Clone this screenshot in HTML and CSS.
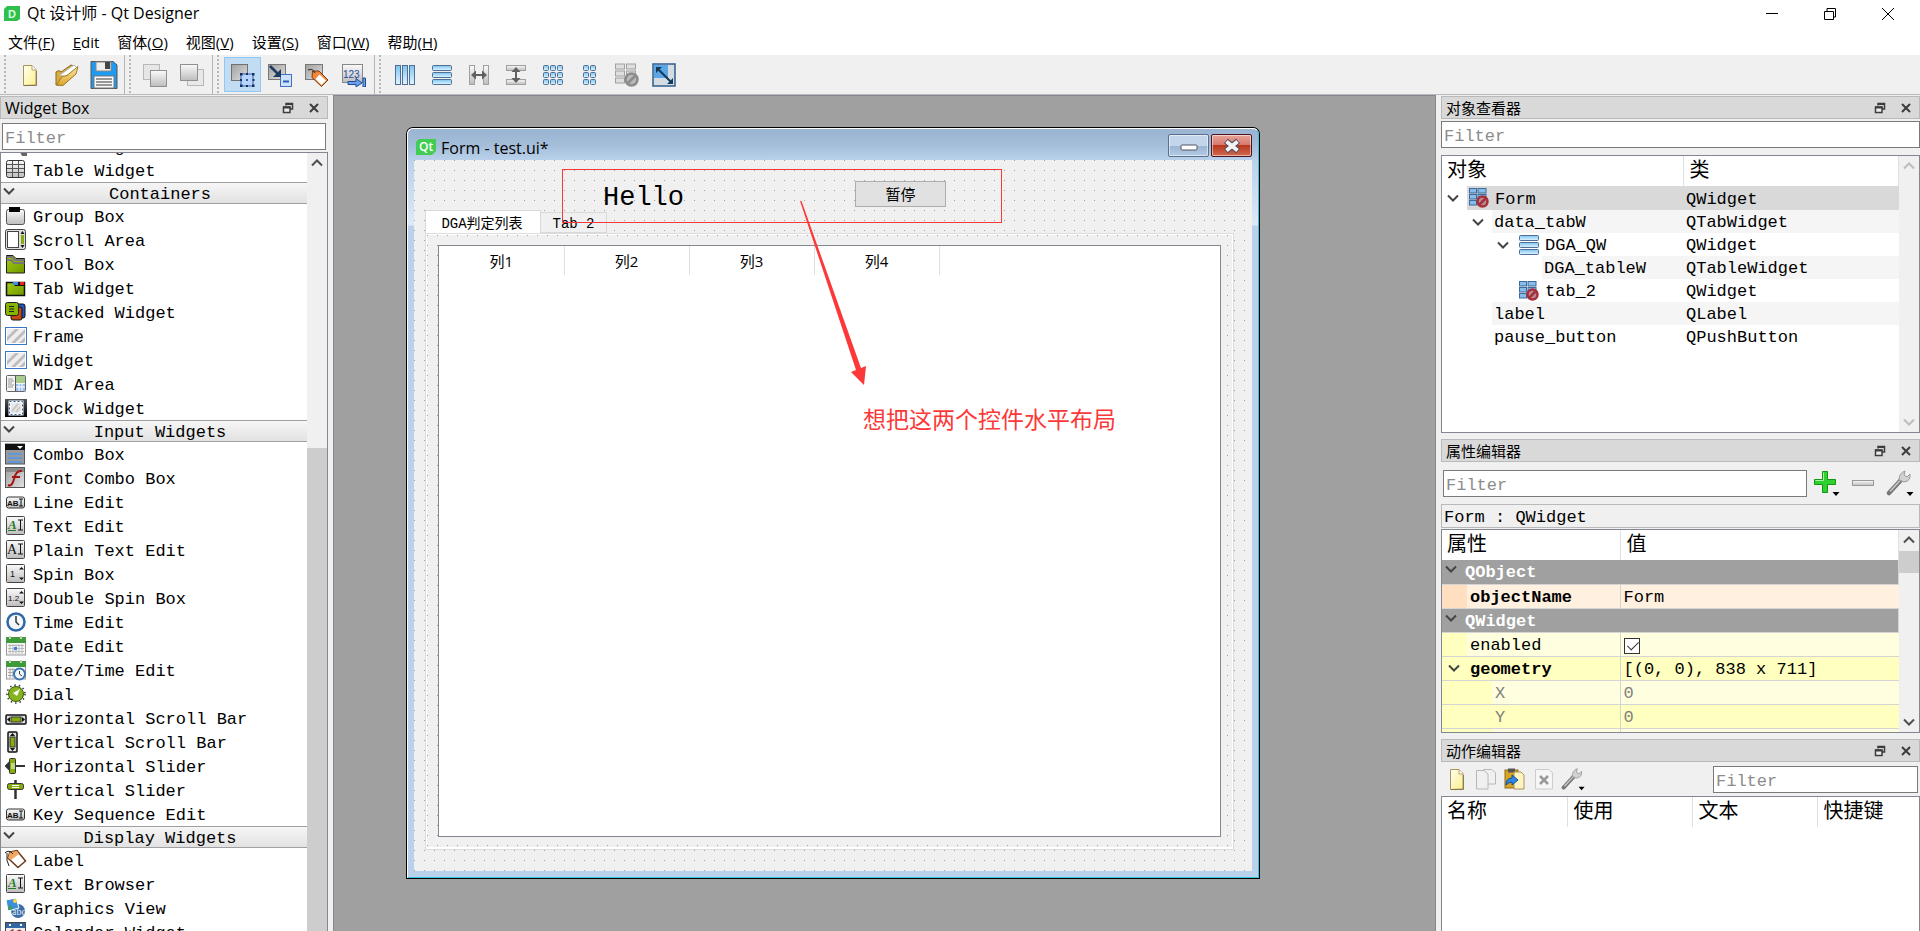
FILE: index.html
```html
<!DOCTYPE html>
<html lang="zh-CN">
<head>
  <meta charset="UTF-8" />
  <title>Qt 设计师 - Qt Designer</title>
  <link rel="stylesheet" href="styles.css">
</head>
<body>

  <!-- Gradients shared by the icons -->
  <svg class="gradients" width="0" height="0" aria-hidden="true">
    <defs>
      <linearGradient id="g-gray" x1="0" y1="0" x2="0" y2="1"><stop offset="0" stop-color="#fafafa"/><stop offset="1" stop-color="#bdbdbd"/></linearGradient>
      <linearGradient id="g-steel" x1="0" y1="0" x2="1" y2="1"><stop offset="0" stop-color="#a0a0a0"/><stop offset="1" stop-color="#e0e0e0"/></linearGradient>
      <linearGradient id="g-blue" x1="0" y1="0" x2="0" y2="1"><stop offset="0" stop-color="#7cc4f0"/><stop offset="1" stop-color="#e2f5ff"/></linearGradient>
      <linearGradient id="g-page" x1="0" y1="0" x2="1" y2="1"><stop offset="0" stop-color="#fffef0"/><stop offset="1" stop-color="#fdf08e"/></linearGradient>
      <linearGradient id="g-folder" x1="0" y1="0" x2="0" y2="1"><stop offset="0" stop-color="#ffe9a0"/><stop offset="1" stop-color="#dba52c"/></linearGradient>
      <linearGradient id="g-green" x1="0" y1="0" x2="1" y2="1"><stop offset="0" stop-color="#a5cf10"/><stop offset="1" stop-color="#6d9600"/></linearGradient>
      <linearGradient id="g-black" x1="0" y1="0" x2="0" y2="1"><stop offset="0" stop-color="#555"/><stop offset="1" stop-color="#000"/></linearGradient>
    </defs>
  </svg>

  <!-- Icon sprite -->
  <svg class="sprite" aria-hidden="true">
    <symbol id="i-restore" viewBox="0 0 12 12"><path d="M4 3.500V1.500H10.500V7H8" fill="none" stroke="#3c3c3c" stroke-width="1.500"/><path d="M4 2H11" stroke="#3c3c3c" stroke-width="2"/><rect x="1.500" y="5" width="6.500" height="5.500" fill="#eee" stroke="#3c3c3c" stroke-width="1.500"/><path d="M1 5.500H8.500" stroke="#3c3c3c" stroke-width="2"/></symbol>
    <symbol id="i-close" viewBox="0 0 12 12"><path d="M2 2L10 10M10 2L2 10" stroke="#3c3c3c" stroke-width="2" fill="none"/></symbol>
    <symbol id="i-down" viewBox="0 0 12 12"><path d="M1 3.500L6 8.500L11 3.500" stroke="#444" stroke-width="2" fill="none"/></symbol>
    <symbol id="i-up" viewBox="0 0 12 12"><path d="M1 8.500L6 3.500L11 8.500" stroke="currentColor" stroke-width="2" fill="none"/></symbol>

    <symbol id="i-new" viewBox="0 0 24 24"><path d="M5.500 2.500H14L18 6.500V22L5.500 22.500Z" fill="url(#g-page)" stroke="#a8935a"/><path d="M14 2.500V7H18" fill="#fff" stroke="#b5a36e"/><path d="M18.500 8V22.500H6" fill="none" stroke="#6f5d2e" stroke-width=".7"/></symbol>
    <symbol id="i-open" viewBox="0 0 24 24"><path d="M1 22V9L4 7.500L6 9L16 2L19 3V12L6 22Z" fill="#d8ac42" stroke="#8a6a1c"/><path d="M5 12L19 2L22 5L10 14Z" fill="#fff" stroke="#bbb"/><path d="M1.500 22L7 13.500L12 12.500L23 3.500L21 11L8 22.500Z" fill="url(#g-folder)" stroke="#9d7a26"/></symbol>
    <symbol id="i-save" viewBox="0 0 28 28"><path d="M1 .500H23L27 4V27.500H1Z" fill="#1d9af2" stroke="#555"/><rect x="6" y="1" width="15" height="9" fill="#eee" stroke="#888"/><rect x="15" y="1" width="5" height="7" fill="#444"/><rect x="4" y="15" width="20" height="12" fill="#fafafa" stroke="#777"/><path d="M6 18H22M6 21H22M6 24H22" stroke="#777" stroke-width="1.500"/></symbol>
    <symbol id="i-back" viewBox="0 0 24 24"><rect x=".500" y="1.500" width="16" height="15" fill="#e6e6e6" stroke="#b8b8b8"/><rect x="7.500" y="7.500" width="16" height="16" fill="url(#g-gray)" stroke="#909090"/></symbol>
    <symbol id="i-front" viewBox="0 0 24 24"><rect x="7.500" y="6.500" width="16" height="16" fill="#e8e8e8" stroke="#b8b8b8"/><rect x=".500" y="1.500" width="17" height="16" fill="url(#g-gray)" stroke="#909090"/></symbol>
    <symbol id="i-edit" viewBox="0 0 24 24"><rect x=".500" y="1.500" width="16" height="16" fill="url(#g-steel)" stroke="#707070"/><rect x="10" y="11" width="12" height="12" fill="#b9d4fa" stroke="#2d5fb5"/><path d="M9 10h2.500v2.500h-2.500zM15 10h2v2h-2zM21 10h2.500v2.500h-2.500zM9 16h2v2h-2zM21.500 16h2v2h-2zM9 21.500h2.500v2.500h-2.500zM15 22h2v2h-2zM21 21.500h2.500v2.500h-2.500z" fill="#132f5e"/><rect x="15" y="16" width="2" height="2" fill="#2d5fb5"/></symbol>
    <symbol id="i-signal" viewBox="0 0 24 24"><rect x=".500" y="1.500" width="17" height="15" fill="url(#g-steel)" stroke="#777"/><rect x="12.500" y="11.500" width="11" height="12" fill="#cfe2fb" stroke="#3f72c4"/><path d="M15 18.500H21" stroke="#2d5fb5" stroke-width="2"/><path d="M2 3L10 11" stroke="#1d3b5f" stroke-width="2.500"/><path d="M13 6V14H5Z" fill="#1d3b5f"/></symbol>
    <symbol id="i-buddy" viewBox="0 0 24 24"><rect x=".500" y="1.500" width="17" height="15" fill="url(#g-steel)" stroke="#777"/><path d="M7.500 8H14L23 17L16.500 23.500L7 14.500Z" fill="#f08838" stroke="#7a3a12"/><path d="M14.500 11.500L21 17.500L16.500 22L10.500 16Z" fill="#fff"/><path d="M3 7Q8 5 10 10" fill="none" stroke="#222"/></symbol>
    <symbol id="i-order" viewBox="0 0 24 24"><rect x=".500" y="1.500" width="20" height="18" fill="url(#g-gray)" stroke="#888"/><text x="1" y="15" font-family="Liberation Sans" font-size="10" fill="#1f4d9c">123</text><path d="M6 18.500H14V15.500L20 20L14 24V21.500H6ZM21 15H23.500V24H21Z" fill="#6f9fe8" stroke="#1f4d9c"/></symbol>
    <symbol id="i-cols" viewBox="0 0 24 24"><g fill="url(#g-blue)" stroke="#4f6f95"><rect x="2.500" y="2.500" width="5" height="19"/><rect x="9.500" y="2.500" width="5" height="19"/><rect x="16.500" y="2.500" width="5" height="19"/></g></symbol>
    <symbol id="i-rows" viewBox="0 0 24 24"><g fill="url(#g-blue)" stroke="#4f6f95"><rect x="2.500" y="2.500" width="19" height="5" rx="1"/><rect x="2.500" y="9.500" width="19" height="5" rx="1"/><rect x="2.500" y="16.500" width="19" height="5" rx="1"/></g></symbol>
    <symbol id="i-hsplit" viewBox="0 0 24 24"><g fill="url(#g-gray)" stroke="#a0a0a0"><rect x="2.500" y="2.500" width="5" height="19"/><rect x="16.500" y="2.500" width="5" height="19"/></g><path d="M4 12L9 7.500V11H15V7.500L20 12L15 16.500V13H9V16.500Z" fill="#606060"/></symbol>
    <symbol id="i-vsplit" viewBox="0 0 24 24"><g fill="url(#g-gray)" stroke="#a0a0a0"><rect x="2.500" y="2.500" width="19" height="5"/><rect x="2.500" y="16.500" width="19" height="5"/></g><path d="M12 4L16.500 9H13V15H16.500L12 20L7.500 15H11V9H7.500Z" fill="#606060"/></symbol>
    <symbol id="i-grid" viewBox="0 0 24 24"><g fill="url(#g-blue)" stroke="#4f6f95"><rect x="2.500" y="2.500" width="5" height="5" rx="1"/><rect x="9.500" y="2.500" width="5" height="5" rx="1"/><rect x="16.500" y="2.500" width="5" height="5" rx="1"/><rect x="2.500" y="9.500" width="5" height="5" rx="1"/><rect x="9.500" y="9.500" width="5" height="5" rx="1"/><rect x="16.500" y="9.500" width="5" height="5" rx="1"/><rect x="2.500" y="16.500" width="5" height="5" rx="1"/><rect x="9.500" y="16.500" width="5" height="5" rx="1"/><rect x="16.500" y="16.500" width="5" height="5" rx="1"/></g></symbol>
    <symbol id="i-form" viewBox="0 0 24 24"><g fill="url(#g-blue)" stroke="#4f6f95"><rect x="5.500" y="2.500" width="5" height="5" rx="1"/><rect x="12.500" y="2.500" width="5" height="5" rx="1"/><rect x="5.500" y="9.500" width="5" height="5" rx="1"/><rect x="12.500" y="9.500" width="5" height="5" rx="1"/><rect x="5.500" y="16.500" width="5" height="5" rx="1"/><rect x="12.500" y="16.500" width="5" height="5" rx="1"/></g></symbol>
    <symbol id="i-break" viewBox="0 0 24 24"><g fill="#dedede" stroke="#a0a0a0"><rect x=".500" y="1" width="9" height="5"/><rect x="11.500" y="1" width="9" height="5"/><rect x=".500" y="8" width="9" height="5"/><rect x="11.500" y="8" width="9" height="5"/><rect x=".500" y="15" width="9" height="5"/></g><circle cx="16.500" cy="16.500" r="6" fill="#b8b8b8" stroke="#8c8c8c" stroke-width="2.500"/><path d="M12.500 20.500L20.500 12.500" stroke="#8c8c8c" stroke-width="2.500"/></symbol>
    <symbol id="i-adjust" viewBox="0 0 24 24"><rect x="1" y="1" width="22" height="22" fill="#d5dce2" stroke="#2f5d8c" stroke-width="1.500"/><rect x="2" y="2" width="14" height="13" fill="#5ba6e6"/><path d="M5 5L19 19" stroke="#123a5c" stroke-width="2"/><path d="M4 4H10L4 10ZM21 21H15L21 15Z" fill="#123a5c"/></symbol>
    <symbol id="i-nolayout" viewBox="0 0 20 20"><g fill="#86bdea" stroke="#3f6a9c"><rect x=".500" y=".500" width="7" height="4.500"/><rect x="9" y=".500" width="8" height="4.500"/><rect x=".500" y="6.500" width="7" height="4.500"/><rect x="9" y="6.500" width="8" height="4.500"/><rect x=".500" y="12.500" width="7" height="4.500"/></g><circle cx="13.500" cy="13.500" r="5" fill="#b98a94" stroke="#a6303a" stroke-width="2.500"/><path d="M10 17L17 10" stroke="#a6303a" stroke-width="2.500"/></symbol>

    <symbol id="w-table" viewBox="0 0 22 22"><rect x="1.500" y="1.500" width="18" height="17" rx="2" fill="url(#g-gray)" stroke="#333"/><path d="M2 5.500H19M2 9.500H19M2 13.500H19M7.500 2V18M13.500 2V18" stroke="#555"/></symbol>
    <symbol id="w-tree" viewBox="0 0 22 22"><path d="M15 17H22V21H17Z" fill="#666"/></symbol>
    <symbol id="w-group" viewBox="0 0 22 22"><rect x="1.500" y="4.500" width="18" height="15" rx="2" fill="url(#g-gray)" stroke="#555"/><rect x="4" y="2" width="11" height="5" fill="#000"/></symbol>
    <symbol id="w-scroll" viewBox="0 0 22 22"><rect x=".500" y=".500" width="20" height="20" rx="2" fill="#ddd" stroke="#444"/><rect x="2.500" y="2.500" width="11" height="16" fill="#fff" stroke="#444"/><rect x="16" y="6" width="3" height="9" fill="#84ac0c"/><path d="M15.500 5L17.500 2L19.500 5ZM15.500 16L17.500 19L19.500 16Z" fill="#111"/></symbol>
    <symbol id="w-tool" viewBox="0 0 22 22"><path d="M1.500 2.500H8L11 5.500H19.500V20H1.500Z" fill="url(#g-green)" stroke="#1c1c1c"/><path d="M1.500 4H7L10 7H19.500M1.500 7H6L9 10H19.500" fill="none" stroke="#777" stroke-width="2"/></symbol>
    <symbol id="w-tab" viewBox="0 0 22 22"><rect x="1.500" y="5.500" width="18" height="13" fill="url(#g-green)" stroke="#111" stroke-width="1.500"/><path d="M7 5H20V9H10Z" fill="#111"/><rect x="8" y="5" width="5" height="3" fill="#3e8ee4"/><rect x="15" y="5" width="4" height="3" fill="#e22"/></symbol>
    <symbol id="w-stack" viewBox="0 0 22 22"><rect x="9" y="3" width="11" height="14" rx="2" fill="#1f56c0" stroke="#111"/><rect x="6" y="6" width="11" height="13" rx="2" fill="#c24a12" stroke="#111"/><rect x=".500" y="1.500" width="13" height="13" rx="2" fill="#86b400" stroke="#222"/><path d="M4 5.500H9M4 8H9M4 10.500H9" stroke="#222"/></symbol>
    <symbol id="w-frame" viewBox="0 0 22 22"><rect x=".500" y="2.500" width="21" height="17" fill="#fff" stroke="#3b78c4"/><rect x="2" y="4" width="18" height="14" fill="#eee"/><path d="M2 12L10 4H14L2 16ZM6 18L20 4V8L10 18ZM14 18L20 12V16L18 18Z" fill="#bdbdbd"/></symbol>
    <symbol id="w-mdi" viewBox="0 0 22 22"><rect x="1.500" y="2.500" width="19" height="16" rx="1" fill="#f4f4f4" stroke="#666"/><rect x="11" y="3" width="9" height="7" fill="#a8cc8c"/><rect x="11" y="11" width="9" height="7" fill="#9cc0f0"/><path d="M3 6H8M3 8H9M3 10H7M3 12H9M3 14H8" stroke="#999"/><path d="M14 11V18M17 11V18M11 14H20" stroke="#fff"/><path d="M10.500 3V18" stroke="#555"/></symbol>
    <symbol id="w-dock" viewBox="0 0 22 22"><rect y="2" width="22" height="18" fill="url(#g-black)"/><rect x="4.500" y="4.500" width="13" height="13" fill="#e8e8e8" stroke="#fff" stroke-width="2"/><rect x="4.500" y="4.500" width="13" height="13" fill="none" stroke="#2d5fb5" stroke-dasharray="2 2"/><path d="M7 14L13 7M11 15L15 10" stroke="#c8c8c8" stroke-width="2"/></symbol>
    <symbol id="w-combo" viewBox="0 0 22 22"><rect x=".500" y="1" width="19" height="20" fill="#999" stroke="#555"/><rect x="0" y="1" width="20" height="6" fill="#111"/><path d="M12 3H18L15 6Z" fill="#fff"/><path d="M3 11H17M3 15H17M3 19H17" stroke="#5f97d8" stroke-width="2"/></symbol>
    <symbol id="w-font" viewBox="0 0 22 22"><rect x=".500" y=".500" width="19" height="20" fill="url(#g-steel)" stroke="#555"/><rect x="1" y="1" width="18" height="4" fill="#888"/><path d="M3 18Q7 20 9 12Q11 3 17 4M7 10H15" fill="none" stroke="#a51414" stroke-width="2"/></symbol>
    <symbol id="w-line" viewBox="0 0 22 22"><rect x="1.500" y="6" width="18" height="11" rx="2" fill="url(#g-gray)" stroke="#333"/><text x="2" y="15" font-family="Liberation Sans" font-size="8" font-weight="bold" fill="#111">AB</text><path d="M14 8H18M16 8V15M14 15H18" stroke="#111"/></symbol>
    <symbol id="w-text" viewBox="0 0 22 22"><rect x="1.500" y="1.500" width="18" height="18" rx="1" fill="url(#g-gray)" stroke="#444"/><text x="3" y="14" font-family="Liberation Serif" font-size="13" font-style="italic" font-weight="bold" fill="#267a26">A</text><path d="M13 5H18M15.500 5V15M13 15H18" stroke="#111"/><path d="M3 15.500H11" stroke="#267a26"/></symbol>
    <symbol id="w-plain" viewBox="0 0 22 22"><rect x="1.500" y="1.500" width="18" height="18" rx="1" fill="url(#g-gray)" stroke="#444"/><text x="2" y="15" font-family="Liberation Serif" font-size="14" fill="#111">A</text><path d="M13 5H18M15.500 5V15M13 15H18" stroke="#111"/></symbol>
    <symbol id="w-spin" viewBox="0 0 22 22"><rect x="1.500" y="1.500" width="18" height="18" rx="1" fill="url(#g-gray)" stroke="#444"/><text x="5" y="14" font-family="Liberation Sans" font-size="9" fill="#111">1</text><path d="M14 6.500L16.500 4L19 6.500ZM14 14.500L16.500 17L19 14.500Z" fill="#111"/></symbol>
    <symbol id="w-dspin" viewBox="0 0 22 22"><rect x="1.500" y="1.500" width="18" height="18" rx="1" fill="url(#g-gray)" stroke="#444"/><text x="3" y="14" font-family="Liberation Sans" font-size="8" fill="#111">1.2</text><path d="M14 6.500L16.500 4L19 6.500ZM14 14.500L16.500 17L19 14.500Z" fill="#111"/></symbol>
    <symbol id="w-time" viewBox="0 0 22 22"><circle cx="11" cy="11" r="8.500" fill="#f4f8fc" stroke="#2f68a8" stroke-width="2.500"/><path d="M11 5V11L14 14" fill="none" stroke="#333" stroke-width="1.500"/></symbol>
    <symbol id="w-date" viewBox="0 0 22 22"><rect x="1.500" y="3" width="19" height="17" fill="#f6f6f6" stroke="#999"/><rect x="1" y="2" width="20" height="6" fill="#3f9a3a"/><path d="M5 4V1M16 4V1" stroke="#ccc" stroke-width="2"/><path d="M3 10.500H19M3 13.500H19M3 16.500H19M5 9V19M8 9V19M11 9V19M14 9V19M17 9V19" stroke="#bbb"/><rect x="9" y="12" width="3" height="3" fill="#3e7ee0"/></symbol>
    <symbol id="w-datetime" viewBox="0 0 22 22"><rect x="1.500" y="3" width="19" height="17" fill="#f6f6f6" stroke="#999"/><rect x="1" y="2" width="20" height="6" fill="#3f9a3a"/><path d="M5 4V1M16 4V1" stroke="#ccc" stroke-width="2"/><path d="M3 10.500H10M3 13.500H10M3 16.500H10M5 9V19M8 9V19" stroke="#aaa"/><circle cx="14.500" cy="15" r="5.500" fill="#f4f8fc" stroke="#3d74b0" stroke-width="2"/><path d="M14.500 12V15L17 17" fill="none" stroke="#333"/></symbol>
    <symbol id="w-dial" viewBox="0 0 22 22"><circle cx="11" cy="11" r="9" fill="none" stroke="#333" stroke-width="1.500" stroke-dasharray="1.500 3"/><circle cx="11" cy="11" r="7.500" fill="#86b41c" stroke="#3c5a08"/><path d="M15 6L12 13L8 10Z" fill="#fff"/></symbol>
    <symbol id="w-hscroll" viewBox="0 0 22 22"><rect x="1" y="8" width="20" height="9" rx="1" fill="#ddd" stroke="#111" stroke-width="1.500"/><rect x="6" y="10" width="10" height="5" fill="#84ac0c" stroke="#333"/><path d="M5 10V15L2 12.500ZM17 10V15L20 12.500Z" fill="#111"/></symbol>
    <symbol id="w-vscroll" viewBox="0 0 22 22"><rect x="3" y="1" width="9" height="20" rx="1" fill="#ddd" stroke="#111" stroke-width="1.500"/><rect x="5" y="6" width="5" height="10" fill="#84ac0c" stroke="#333"/><path d="M5 5H10L7.500 2ZM5 17H10L7.500 20Z" fill="#111"/></symbol>
    <symbol id="w-hslider" viewBox="0 0 22 22"><path d="M1 11L4 8V14ZM3 11H20" stroke="#333" stroke-width="2" fill="#333"/><rect x="4.500" y="3.500" width="6" height="15" rx="1" fill="#84ac0c" stroke="#333"/><path d="M7 8V14M9 8V14" stroke="#fff"/></symbol>
    <symbol id="w-vslider" viewBox="0 0 22 22"><path d="M10.500 1V20" stroke="#333" stroke-width="2.500"/><rect x="2.500" y="4.500" width="16" height="6" rx="2" fill="#84ac0c" stroke="#333"/><path d="M7 6.500H14M7 8.500H14" stroke="#fff"/></symbol>
    <symbol id="w-label" viewBox="0 0 22 22"><path d="M5 3L12 1.500L20.500 12L13 18.500L3 9Z" fill="#fff" stroke="#6b3a1a" stroke-width="1.500"/><path d="M5 3L12 2L14 5L6 11L3 9Z" fill="#f0a860"/><path d="M0 4Q4 0 8 5M2 4Q1 12 4 17" fill="none" stroke="#222"/></symbol>
    <symbol id="w-graphics" viewBox="0 0 22 22"><circle cx="13" cy="14" r="7" fill="#3b6ea8"/><path d="M1 3L11 1L14 11L3 14Z" fill="#3b8ee0" stroke="#fff"/><path d="M3 13L5 7L8 12Z" fill="#3fa050"/><circle cx="10" cy="4" r="2" fill="#f8d848"/><text x="7" y="18" font-family="Liberation Serif" font-size="10" fill="#dfe6ee">abc</text></symbol>
    <symbol id="w-calendar" viewBox="0 0 22 22"><rect x=".500" y="1.500" width="20" height="20" fill="#eee" stroke="#444"/><rect x="1" y="2" width="19" height="5" fill="#3465a4"/><path d="M4 4H6M15 4H17" stroke="#fff" stroke-width="2"/><path d="M5 11L7.500 9.500V18M12 11Q15 8 16 11Q16 13 12 17.500H17" fill="none" stroke="#a33" stroke-width="2"/></symbol>

    <symbol id="i-plus" viewBox="0 0 28 28"><path d="M10.500 2.500H15.500V10.500H23.500V15.500H15.500V23.500H10.500V15.500H2.500V10.500H10.500Z" fill="#2ed12e" stroke="#159415"/><path d="M11.500 3.500V11.500H3.500" fill="none" stroke="#a8f5a8"/><path d="M20.500 23H27.500L24 27Z" fill="#000"/></symbol>
    <symbol id="i-minus" viewBox="0 0 24 24"><rect x="1.500" y="9.500" width="21" height="5" fill="url(#g-gray)" stroke="#999"/></symbol>
    <symbol id="i-wrench" viewBox="0 0 28 28"><path d="M3 24L15 11" stroke="#777" stroke-width="4.500" stroke-linecap="round"/><path d="M4 22.500L14 11.500" stroke="#ccc" stroke-width="1.500"/><path d="M13 11Q13 4 19 2L18 6L21 8L24 5Q25 12 18 13Z" fill="#d2d2d2" stroke="#999"/><path d="M20.500 23H27.500L24 27Z" fill="#000"/></symbol>
    <symbol id="i-copy" viewBox="0 0 24 24"><g fill="#f0f0f0" stroke="#b8b8b8"><path d="M9.500 2.500H18L21.500 6V17H9.500Z"/><path d="M2.500 3.500H10L14 7V22H2.500Z"/></g></symbol>
    <symbol id="i-paste" viewBox="0 0 24 24"><rect x="2" y="3" width="13" height="18" fill="#d9a520" stroke="#8a6a1c"/><rect x="5" y="1.500" width="7" height="4" fill="#555"/><path d="M11 5H18L21 8V22H11Z" fill="#fdf3c2" stroke="#a8935a"/><path d="M3 18Q3 11 9 11V8L15 13L9 18V15Q6 15 3 18Z" fill="#2f86e8" stroke="#16508c"/></symbol>
    <symbol id="i-delete" viewBox="0 0 24 24"><path d="M3.500 2.500H17L20.500 6V22H3.500Z" fill="#f5f5f5" stroke="#ccc"/><path d="M8 9L16 17M16 9L8 17" stroke="#999" stroke-width="2.500"/></symbol>
  </svg>

  <header class="title-bar">
    <svg class="app-icon" viewBox="0 0 16 16"><path d="M3 0H16V13L13 15H0V3Z" fill="#2fbf4c"/><text x="4" y="12" font-family="Liberation Sans" font-size="11" font-weight="bold" fill="#d8ffdf">D</text></svg>
    <h1>Qt 设计师 - Qt Designer</h1>
    <div class="window-controls">
      <button aria-label="Minimize"><svg viewBox="0 0 14 14"><path d="M1 6.500H13" stroke="#000" fill="none"/></svg></button>
      <button aria-label="Restore"><svg viewBox="0 0 14 14"><path d="M1.500 4.500H10.500V12.500H1.500ZM4 4V1.500H12.500V10H11" stroke="#000" fill="none"/></svg></button>
      <button aria-label="Close"><svg viewBox="0 0 14 14"><path d="M1 1L13 13M13 1L1 13" stroke="#000" fill="none"/></svg></button>
    </div>
  </header>

  <nav class="menu-bar">
    <a href="#">文件(<u>F</u>)</a>
    <a href="#"><u>E</u>dit</a>
    <a href="#">窗体(<u>O</u>)</a>
    <a href="#">视图(<u>V</u>)</a>
    <a href="#">设置(<u>S</u>)</a>
    <a href="#">窗口(<u>W</u>)</a>
    <a href="#">帮助(<u>H</u>)</a>
  </nav>

  <div class="toolbar">
    <div class="tool-group">
      <button aria-label="New"><svg><use href="#i-new"/></svg></button>
      <button aria-label="Open"><svg><use href="#i-open"/></svg></button>
      <button aria-label="Save"><svg class="large"><use href="#i-save"/></svg></button>
    </div>
    <div class="tool-group">
      <button aria-label="Send to back"><svg><use href="#i-back"/></svg></button>
      <button aria-label="Bring to front"><svg><use href="#i-front"/></svg></button>
    </div>
    <div class="tool-group">
      <button class="active" aria-label="Edit widgets"><svg><use href="#i-edit"/></svg></button>
      <button aria-label="Edit signals"><svg><use href="#i-signal"/></svg></button>
      <button aria-label="Edit buddies"><svg><use href="#i-buddy"/></svg></button>
      <button aria-label="Edit tab order"><svg><use href="#i-order"/></svg></button>
    </div>
    <div class="tool-group">
      <button aria-label="Lay out horizontally"><svg><use href="#i-cols"/></svg></button>
      <button aria-label="Lay out vertically"><svg><use href="#i-rows"/></svg></button>
      <button aria-label="Horizontal splitter"><svg><use href="#i-hsplit"/></svg></button>
      <button aria-label="Vertical splitter"><svg><use href="#i-vsplit"/></svg></button>
      <button aria-label="Grid layout"><svg><use href="#i-grid"/></svg></button>
      <button aria-label="Form layout"><svg><use href="#i-form"/></svg></button>
      <button aria-label="Break layout"><svg><use href="#i-break"/></svg></button>
      <button aria-label="Adjust size"><svg><use href="#i-adjust"/></svg></button>
    </div>
  </div>

  <main class="workspace">
    <!-- Widget box -->
    <aside class="dock widget-box">
      <div class="dock-title">
        <h2>Widget Box</h2>
        <button aria-label="Float"><svg><use href="#i-restore"/></svg></button>
        <button aria-label="Close"><svg><use href="#i-close"/></svg></button>
      </div>
      <input class="filter" type="text" placeholder="Filter" aria-label="Filter widgets">
      <div class="scroll-frame">
        <div class="widget-list">
          <ul class="scrolled">
            <li><svg><use href="#w-tree"/></svg>Tree Widget</li>
            <li><svg><use href="#w-table"/></svg>Table Widget</li>
          </ul>
          <h3><svg><use href="#i-down"/></svg>Containers</h3>
          <ul>
            <li><svg><use href="#w-group"/></svg>Group Box</li>
            <li><svg><use href="#w-scroll"/></svg>Scroll Area</li>
            <li><svg><use href="#w-tool"/></svg>Tool Box</li>
            <li><svg><use href="#w-tab"/></svg>Tab Widget</li>
            <li><svg><use href="#w-stack"/></svg>Stacked Widget</li>
            <li><svg><use href="#w-frame"/></svg>Frame</li>
            <li><svg><use href="#w-frame"/></svg>Widget</li>
            <li><svg><use href="#w-mdi"/></svg>MDI Area</li>
            <li><svg><use href="#w-dock"/></svg>Dock Widget</li>
          </ul>
          <h3><svg><use href="#i-down"/></svg>Input Widgets</h3>
          <ul>
            <li><svg><use href="#w-combo"/></svg>Combo Box</li>
            <li><svg><use href="#w-font"/></svg>Font Combo Box</li>
            <li><svg><use href="#w-line"/></svg>Line Edit</li>
            <li><svg><use href="#w-text"/></svg>Text Edit</li>
            <li><svg><use href="#w-plain"/></svg>Plain Text Edit</li>
            <li><svg><use href="#w-spin"/></svg>Spin Box</li>
            <li><svg><use href="#w-dspin"/></svg>Double Spin Box</li>
            <li><svg><use href="#w-time"/></svg>Time Edit</li>
            <li><svg><use href="#w-date"/></svg>Date Edit</li>
            <li><svg><use href="#w-datetime"/></svg>Date/Time Edit</li>
            <li><svg><use href="#w-dial"/></svg>Dial</li>
            <li><svg><use href="#w-hscroll"/></svg>Horizontal Scroll Bar</li>
            <li><svg><use href="#w-vscroll"/></svg>Vertical Scroll Bar</li>
            <li><svg><use href="#w-hslider"/></svg>Horizontal Slider</li>
            <li><svg><use href="#w-vslider"/></svg>Vertical Slider</li>
            <li><svg><use href="#w-line"/></svg>Key Sequence Edit</li>
          </ul>
          <h3><svg><use href="#i-down"/></svg>Display Widgets</h3>
          <ul>
            <li><svg><use href="#w-label"/></svg>Label</li>
            <li><svg><use href="#w-text"/></svg>Text Browser</li>
            <li><svg><use href="#w-graphics"/></svg>Graphics View</li>
            <li><svg><use href="#w-calendar"/></svg>Calendar Widget</li>
          </ul>
        </div>
        <div class="scrollbar">
          <svg><use href="#i-up"/></svg>
          <div class="thumb thumb-widgets"></div>
        </div>
      </div>
    </aside>

    <!-- Form being edited -->
    <section class="mdi">
      <div class="form-window">
        <div class="form-title">
          <svg class="qt-icon" viewBox="0 0 20 16"><path d="M3 0H20V12L16 16H0V3Z" fill="#41cd52"/><text x="3" y="12" font-family="Open Sans" font-size="12" font-weight="600" fill="#fff">Qt</text></svg>
          <span class="form-name">Form - test.ui*</span>
          <button class="form-min" aria-label="Minimize form"><svg viewBox="0 0 20 16"><rect x="2" y="7" width="16" height="5" rx="1" fill="#fff" stroke="#556"/></svg></button>
          <button class="form-close" aria-label="Close form"><svg viewBox="0 0 20 16"><path d="M4 3L16 13M16 3L4 13" stroke="#4a4a5a" stroke-width="6"/><path d="M4.500 3.500L15.500 12.500M15.500 3.500L4.500 12.500" stroke="#f4f4f4" stroke-width="4"/></svg></button>
        </div>
        <div class="form-page">
          <div class="tab-widget">
            <div class="tabs">
              <button class="tab current">DGA判定列表</button>
              <button class="tab">Tab 2</button>
            </div>
            <div class="tab-pane">
              <div class="table-view">
                <table>
                  <thead><tr><th>列1</th><th>列2</th><th>列3</th><th>列4</th></tr></thead>
                </table>
              </div>
            </div>
          </div>
          <span class="hello">Hello</span>
          <button class="pause">暂停</button>
          <div class="mark-box"></div>
          <svg class="mark-arrow" viewBox="0 0 70 190"><path d="M2 0H3.500L63 167L68 165L66 184L53 171L58 169Z" fill="#fc3838"/></svg>
          <p class="mark-text">想把这两个控件水平布局</p>
        </div>
      </div>
    </section>

    <!-- Right hand docks -->
    <aside class="side">
      <section class="dock">
        <div class="dock-title">
          <h2>对象查看器</h2>
          <button aria-label="Float"><svg><use href="#i-restore"/></svg></button>
          <button aria-label="Close"><svg><use href="#i-close"/></svg></button>
        </div>
        <input class="filter" type="text" placeholder="Filter" aria-label="Filter objects">
        <div class="scroll-frame inspector">
          <table class="tree">
            <colgroup><col class="col-object"><col></colgroup>
            <thead><tr><th>对象</th><th>类</th></tr></thead>
            <tbody>
              <tr class="selected"><td class="level-0"><div><svg class="arrow"><use href="#i-down"/></svg><svg><use href="#i-nolayout"/></svg>Form</div></td><td>QWidget</td></tr>
              <tr class="alt"><td class="level-1"><div><svg class="arrow"><use href="#i-down"/></svg>data_tabW</div></td><td>QTabWidget</td></tr>
              <tr><td class="level-2"><div><svg class="arrow"><use href="#i-down"/></svg><svg viewBox="2 2 20 20"><use href="#i-rows" width="24" height="24"/></svg>DGA_QW</div></td><td>QWidget</td></tr>
              <tr class="alt"><td class="level-3"><div>DGA_tableW</div></td><td>QTableWidget</td></tr>
              <tr><td class="level-2"><div class="leaf"><svg><use href="#i-nolayout"/></svg>tab_2</div></td><td>QWidget</td></tr>
              <tr class="alt"><td class="level-1"><div class="leaf">label</div></td><td>QLabel</td></tr>
              <tr><td class="level-1"><div class="leaf">pause_button</div></td><td>QPushButton</td></tr>
            </tbody>
          </table>
          <div class="scrollbar idle">
            <svg><use href="#i-up"/></svg>
            <svg class="flip"><use href="#i-up"/></svg>
          </div>
        </div>
      </section>

      <section class="dock">
        <div class="dock-title">
          <h2>属性编辑器</h2>
          <button aria-label="Float"><svg><use href="#i-restore"/></svg></button>
          <button aria-label="Close"><svg><use href="#i-close"/></svg></button>
        </div>
        <div class="property-bar">
          <input class="filter" type="text" placeholder="Filter" aria-label="Filter properties">
          <button aria-label="Add property"><svg><use href="#i-plus"/></svg></button>
          <button aria-label="Remove property"><svg class="small"><use href="#i-minus"/></svg></button>
          <button aria-label="Configure"><svg><use href="#i-wrench"/></svg></button>
        </div>
        <div class="object-name">Form : QWidget</div>
        <div class="scroll-frame properties">
          <table class="props">
            <colgroup><col class="col-prop"><col></colgroup>
            <thead><tr><th>属性</th><th>值</th></tr></thead>
            <tbody>
              <tr class="section"><td colspan="2"><svg><use href="#i-down"/></svg>QObject</td></tr>
              <tr class="orange"><td><b>objectName</b></td><td>Form</td></tr>
              <tr class="section"><td colspan="2"><svg><use href="#i-down"/></svg>QWidget</td></tr>
              <tr class="yellow"><td><label for="enabled">enabled</label></td><td><input id="enabled" type="checkbox" checked></td></tr>
              <tr class="yellow dark"><td class="parent"><svg><use href="#i-down"/></svg><b>geometry</b></td><td>[(0, 0), 838 x 711]</td></tr>
              <tr class="yellow child"><td>X</td><td>0</td></tr>
              <tr class="yellow dark child"><td>Y</td><td>0</td></tr>
              <tr class="yellow child"><td>Width</td><td>838</td></tr>
            </tbody>
          </table>
          <div class="scrollbar">
            <svg><use href="#i-up"/></svg>
            <div class="thumb thumb-props"></div>
            <svg class="flip"><use href="#i-up"/></svg>
          </div>
        </div>
      </section>

      <section class="dock actions">
        <div class="dock-title">
          <h2>动作编辑器</h2>
          <button aria-label="Float"><svg><use href="#i-restore"/></svg></button>
          <button aria-label="Close"><svg><use href="#i-close"/></svg></button>
        </div>
        <div class="action-bar">
          <button aria-label="New action"><svg><use href="#i-new"/></svg></button>
          <button aria-label="Copy"><svg><use href="#i-copy"/></svg></button>
          <button aria-label="Paste"><svg><use href="#i-paste"/></svg></button>
          <button aria-label="Delete"><svg><use href="#i-delete"/></svg></button>
          <button aria-label="Configure"><svg><use href="#i-wrench"/></svg></button>
          <input class="filter" type="text" placeholder="Filter" aria-label="Filter actions">
        </div>
        <div class="action-table">
          <table>
            <thead><tr><th>名称</th><th>使用</th><th>文本</th><th>快捷键</th></tr></thead>
          </table>
        </div>
      </section>
    </aside>
  </main>
</body>
</html>
```
FILE: styles.css
```css
* {
  box-sizing: border-box;
}
body {
  margin: 0;
  height: 100vh;
  overflow: hidden;
  display: flex;
  flex-direction: column;
  font-family: "Open Sans", "Noto Sans CJK SC", sans-serif;
  font-size: 15px;
  color: #000;
  background: #f0f0f0;
}
h1, h2, h3, p, ul {
  margin: 0;
  padding: 0;
  font-weight: normal;
  font-size: inherit;
}
ul {
  list-style: none;
}
button {
  padding: 0;
  border: none;
  background: none;
  font: inherit;
  color: inherit;
  display: flex;
  align-items: center;
  justify-content: center;
}
table {
  border-collapse: collapse;
}
th, td {
  padding: 0;
  text-align: left;
  font-weight: normal;
}
svg {
  flex: none;
}
.gradients {
  position: absolute;
}
.sprite {
  display: none;
}

/* Title bar and menu */
.title-bar {
  height: 28px;
  flex: none;
  display: flex;
  align-items: center;
  gap: 7px;
  padding: 0 3px 0 4px;
  background: #fff;
}
.app-icon {
  width: 16px;
  height: 16px;
}
.title-bar h1 {
  flex: 1;
  font-size: 16px;
  line-height: 22px;
  padding-bottom: 2px;
}
.window-controls {
  display: flex;
}
.window-controls button {
  width: 58px;
  height: 28px;
}
.window-controls svg {
  width: 14px;
  height: 14px;
}
.menu-bar {
  height: 27px;
  flex: none;
  display: flex;
  align-items: center;
  gap: 2px;
  background: #fff;
}
.menu-bar a {
  padding: 0 8px;
  line-height: 26px;
  color: #000;
  text-decoration: none;
}

/* Toolbar */
.toolbar {
  height: 40px;
  flex: none;
  display: flex;
  align-items: stretch;
  border-bottom: 1px solid #b9b9b9;
}
.tool-group {
  display: flex;
  align-items: center;
  padding: 0 2px 0 11px;
  border-right: 1px solid #b5b5b5;
  background: radial-gradient(circle, #b8b8b8 1px, transparent 1px) 3px 3px / 4px 4px repeat-y;
}
.tool-group:last-child {
  border-right: none;
}
.tool-group button {
  width: 37px;
  height: 35px;
}
.tool-group .active {
  background: #c2dcf3;
  border: 1px solid #90c8f6;
}
.tool-group svg {
  width: 24px;
  height: 24px;
}
.tool-group .large {
  width: 28px;
  height: 28px;
}

/* Docks */
.workspace {
  flex: 1;
  min-height: 0;
  display: grid;
  grid-template-columns: 328px 1fr 479px;
  column-gap: 5px;
}
.dock {
  display: flex;
  flex-direction: column;
}
.dock-title {
  height: 23px;
  margin-top: 1px;
  flex: none;
  display: flex;
  align-items: center;
  gap: 14px;
  padding: 0 7px 0 4px;
  border: 1px solid #b9b9b9;
  background: #d9d9d9;
}
.dock-title h2 {
  flex: 1;
}
.dock-title svg {
  width: 12px;
  height: 12px;
}
.filter,
.widget-list,
.scroll-frame table,
.object-name,
.action-table {
  font-family: "Liberation Mono", "Noto Sans CJK SC", monospace;
  font-size: 17px;
}
.filter {
  height: 27px;
  min-width: 0;
  flex: none;
  padding: 4px 2px 0;
  border: 1px solid #7a7a7a;
  border-radius: 0;
  background: #fff;
}
.filter::placeholder {
  color: #8c8c8c;
  opacity: 1;
}
.scroll-frame {
  display: flex;
  align-items: stretch;
  overflow: hidden;
  border: 1px solid #828790;
  background: #fff;
}
.scrollbar {
  width: 20px;
  flex: none;
  display: flex;
  flex-direction: column;
  align-items: center;
  padding: 4px 0;
  background: #f0f0f0;
  color: #505050;
}
.scrollbar svg {
  width: 12px;
  height: 12px;
}
.scrollbar .flip {
  margin-top: auto;
  transform: rotate(180deg);
}
.scrollbar.idle {
  color: #bcbcbc;
}
.thumb {
  width: 20px;
  background: #cdcdcd;
}

/* Widget box */
.widget-box {
  min-height: 0;
}
.widget-box h2 {
  font-size: 16px;
}
.widget-box .filter {
  margin: 4px 2px 2px;
}
.widget-box .scroll-frame {
  flex: 1;
  min-height: 0;
  border-bottom: none;
}
.widget-list {
  flex: 1;
}
.widget-list .scrolled {
  margin-top: -19px;
}
.widget-list li {
  height: 24px;
  display: flex;
  align-items: center;
  gap: 6px;
  padding: 2px 0 0 4px;
}
.widget-list li svg {
  width: 22px;
  height: 22px;
  margin-bottom: 2px;
}
.widget-list h3 {
  height: 22px;
  display: flex;
  align-items: center;
  justify-content: center;
  padding: 2px 2px 0 0;
  border-top: 1px solid #a0a0a0;
  border-bottom: 1px solid #a0a0a0;
  background: linear-gradient(#f6f6f6, #e2e2e2);
}
.widget-list h3 svg {
  width: 12px;
  height: 12px;
  margin: 0 auto 6px 2px;
}
.widget-list h3::after {
  content: "";
  margin-left: auto;
}
.thumb-widgets {
  flex: 1;
  margin: 279px 0 -4px;
}

/* MDI area */
.mdi {
  position: relative;
  overflow: hidden;
  border: 1px solid #828790;
  border-bottom: none;
  background: #a0a0a0;
}
.form-window {
  position: absolute;
  left: 73px;
  top: 32px;
  padding: 0 6px 6px;
  border: 1px solid #fff;
  border-right-color: #35c5df;
  border-bottom-color: #35c5df;
  border-radius: 6px 6px 0 0;
  box-shadow: 0 0 0 1px #000;
  background: linear-gradient(#9ab4d1, #a3bcd8 15px, #b9d1ea 31px, #dce9f8 96px, #b9d1ea 97px);
}
.form-title {
  height: 31px;
  display: flex;
  align-items: center;
  gap: 5px;
  padding-left: 2px;
}
.form-name {
  flex: 1;
  font-size: 16px;
  padding-top: 6px;
}
.qt-icon {
  width: 20px;
  height: 16px;
  margin-top: 4px;
}
.form-title button {
  width: 41px;
  height: 23px;
  margin-top: 2px;
  border: 1px solid #5a6f8c;
  border-radius: 2px;
  box-shadow: inset 0 0 0 1px rgba(255, 255, 255, 0.5);
}
.form-title button svg {
  width: 20px;
  height: 16px;
}
.form-min {
  background: linear-gradient(#c2d5ea 50%, #9ab3d0 50%, #b4cbe4);
}
.form-title .form-close {
  margin-left: -3px;
  border-color: #4a1420;
  background: linear-gradient(#e8a398, #d87c6e 45%, #b8391f 50%, #d06a50);
}
.form-page {
  position: relative;
  width: 838px;
  height: 711px;
}
/* Designer grid: one dot every 10px */
.form-page,
.tab-pane {
  background-image:
    linear-gradient(to right, transparent 1px, #f0f0f0 1px),
    linear-gradient(#a0a0a0 1px, #f0f0f0 1px);
  background-size: 10px 10px;
}
.tab-widget {
  position: absolute;
  left: 11px;
  top: 50px;
  width: 809px;
  height: 640px;
  display: flex;
  flex-direction: column;
}
.tabs {
  display: flex;
  align-items: flex-end;
  height: 23px;
}
.tab {
  width: 66px;
  height: 21px;
  padding-top: 2px;
  border: 1px solid #d9d9d9;
  border-left: none;
  background: #f0f0f0;
  font-family: "Liberation Mono", "Noto Sans CJK SC", monospace;
  font-size: 14px;
}
.tab.current {
  width: 116px;
  height: 24px;
  margin-bottom: -1px;
  padding: 0 2px 2px 0;
  border-left: 1px solid #d9d9d9;
  border-bottom: none;
  background: #fff;
}
.tab-pane {
  flex: 1;
  display: flex;
  padding: 11px 12px 12px;
  border: 1px solid #dcdcdc;
  box-shadow: inset -1px -2px 0 #fff, inset 1px 1px 0 #fff;
  background-position: 1px 1px;
}
.table-view {
  flex: 1;
  border: 1px solid #828790;
  background: #fff;
}
.table-view th {
  width: 125px;
  height: 29px;
  text-align: center;
  border-right: 1px solid #e0e0e0;
}
.hello {
  position: absolute;
  left: 189px;
  top: 23px;
  font-family: "Liberation Mono", monospace;
  font-size: 27px;
}
.pause {
  position: absolute;
  left: 441px;
  top: 21px;
  width: 91px;
  height: 26px;
  padding-bottom: 2px;
  border: 1px solid #adadad;
  background: #e1e1e1;
}

/* Red annotations */
.mark-box {
  position: absolute;
  left: 148px;
  top: 9px;
  width: 440px;
  height: 54px;
  border: 1px solid #fc3838;
}
.mark-arrow {
  position: absolute;
  left: 384px;
  top: 41px;
  width: 70px;
  height: 190px;
}
.mark-text {
  position: absolute;
  left: 449px;
  top: 241px;
  font-size: 23px;
  color: #fc3838;
}

/* Object inspector */
.side {
  display: flex;
  flex-direction: column;
  min-height: 0;
}
.side .dock-title + .filter {
  margin-top: 2px;
}
.inspector {
  height: 278px;
  margin: 7px 0 5px;
}
.tree, .props {
  flex: 1;
  table-layout: fixed;
  align-self: flex-start;
}
.side th {
  height: 30px;
  padding: 2px 0 0 6px;
  font-size: 20px;
  line-height: 28px;
  border-right: 1px solid #e0e0e0;
}
.side th:first-child {
  padding-left: 5px;
}
.col-object {
  width: 241px;
}
.tree td {
  height: 23px;
  padding: 2px 0 0 3px;
  line-height: 21px;
}
.tree td div {
  height: 21px;
  display: flex;
  align-items: center;
  gap: 6px;
}
.tree svg {
  width: 20px;
  height: 20px;
  margin-bottom: 2px;
}
.tree .arrow {
  width: 12px;
  height: 12px;
  margin-right: 4px;
}
.tree .leaf {
  padding-left: 22px;
}
.tree .selected td {
  height: 24px;
}
.tree td.level-0 {
  padding-left: 5px;
}
.tree td.level-1 {
  padding-left: 30px;
}
.tree td.level-2 {
  padding-left: 55px;
}
.tree td.level-3 {
  padding-left: 102px;
}
.tree .alt td {
  background: #f5f5f5;
}
.tree .selected td {
  background: #d9d9d9;
}
.tree .selected .level-0 {
  background: linear-gradient(to right, #fff 25px, #d9d9d9 25px);
}
.tree .alt .level-1 {
  background: linear-gradient(to right, #fff 50px, #f5f5f5 50px);
}
.tree .alt .level-3 {
  background: linear-gradient(to right, #fff 100px, #f5f5f5 100px);
}

/* Property editor */
.property-bar {
  height: 42px;
  display: flex;
  align-items: center;
  padding: 0 2px;
}
.property-bar .filter {
  flex: 1;
}
.property-bar button {
  width: 37px;
}
.property-bar svg {
  width: 28px;
  height: 28px;
}
.property-bar .small {
  width: 24px;
  height: 24px;
}
.object-name {
  height: 24px;
  padding: 2px 2px 0;
  line-height: 22px;
  border: 1px solid #b9b9b9;
}
.properties {
  height: 204px;
  margin: 1px 0 5px;
}
.col-prop {
  width: 178px;
}
.props td {
  height: 24px;
  padding: 3px 0 0 3px;
  line-height: 20px;
  border-bottom: 1px solid #d4d4d4;
}
.props td:first-child {
  padding-left: 28px;
  border-right: 1px solid #d4d4d4;
}
.props .section td {
  padding-left: 3px;
  color: #fff;
  font-weight: bold;
  background: #a0a0a0;
}
.props svg {
  width: 12px;
  height: 12px;
}
.props .section svg {
  margin: 0 8px 2px 0;
}
.props td.parent {
  padding-left: 6px;
}
.props .parent svg {
  margin-right: 10px;
}
.props .child td {
  color: #808080;
}
.props .child td:first-child {
  padding-left: 53px;
}
.orange td {
  background: #fff0df;
}
.orange td:first-child {
  background: linear-gradient(to right, #ffdfbf 25px, #fff0df 25px);
}
.yellow td {
  background: #ffffdf;
}
.yellow td:first-child {
  background: linear-gradient(to right, #ffffbf 25px, #ffffdf 25px);
}
.yellow.child td:first-child {
  background: linear-gradient(to right, #ffffbf 50px, #ffffdf 50px);
}
.yellow.dark td,
.yellow.dark td:first-child {
  background: #ffffbf;
}
#enabled {
  appearance: none;
  width: 16px;
  height: 16px;
  margin: 0;
  display: block;
  border: 1px solid #333;
  background: #fff;
}
#enabled:checked::after {
  content: "";
  display: block;
  width: 5px;
  height: 10px;
  margin: 0 0 0 5px;
  border: solid #333;
  border-width: 0 1px 1px 0;
  transform: rotate(45deg);
}
.thumb-props {
  height: 22px;
  margin-top: 5px;
}

/* Action editor */
.actions {
  flex: 1;
  min-height: 0;
}
.action-bar {
  height: 34px;
  flex: none;
  display: flex;
  align-items: center;
  gap: 5px;
  padding: 0 2px 0 4px;
}
.action-bar button {
  width: 24px;
}
.action-bar svg {
  width: 24px;
  height: 24px;
}
.action-bar .filter {
  width: 205px;
  margin-left: auto;
}
.action-table {
  flex: 1;
  overflow: hidden;
  border: 1px solid #828790;
  border-bottom: none;
  background: #fff;
}
.action-table table {
  width: 500px;
  table-layout: fixed;
}
.action-table th:last-child {
  border-right: none;
}
```
